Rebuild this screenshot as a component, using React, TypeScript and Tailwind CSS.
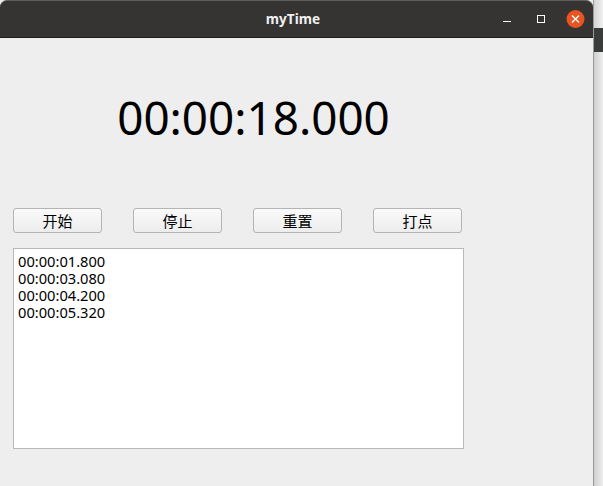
import React from 'react';

const font = { fontFamily: '"Noto Sans", "Noto Sans CJK SC", sans-serif' };

const buttons = ['开始', '停止', '重置', '打点'];
const laps = ['00:00:01.800', '00:00:03.080', '00:00:04.200', '00:00:05.320'];

export default function App() {
  return (
    <div className="flex h-[486px] w-[603px] overflow-hidden bg-[#e8e8e8]" style={font}>
      {/* Window */}
      <div className="flex h-full w-[594px] shrink-0 flex-col border-r border-[#9a9a9a] bg-[#eeeeee]">
        {/* Title bar */}
        <div className="relative flex h-[38px] shrink-0 items-center justify-center rounded-t-[7px] border-t border-t-[#5e5e5e] border-b border-b-[#1f1f1f] bg-[#353433] pr-[7px]">
          <span className="text-[13.6px] font-bold text-[#f0f0f0]">myTime</span>
          <div className="absolute right-[7px] top-[9px] flex items-center">
            <svg width="20" height="20" viewBox="0 0 20 20" className="mr-[15px]">
              <rect x="4" y="11" width="8" height="1" fill="#ffffff" />
            </svg>
            <svg width="20" height="20" viewBox="0 0 20 20" className="mr-[12px]">
              <rect x="3.5" y="5.5" width="7" height="7" fill="none" stroke="#ffffff" strokeWidth="1" />
            </svg>
            <svg width="20" height="20" viewBox="0 0 20 20">
              <circle cx="9.5" cy="9" r="9" fill="#e95420" />
              <path d="M6 5.5l7 7M13 5.5l-7 7" stroke="#ffffff" strokeWidth="1.4" />
            </svg>
          </div>
        </div>

        {/* Timer */}
        <div className="flex h-[170px] w-[507px] shrink-0 items-center justify-center pb-[10px] text-[45.8px] leading-none text-black">
          00:00:18.000
        </div>

        {/* Buttons */}
        <div className="ml-[13px] flex w-[449px] justify-between">
          {buttons.map((label) => (
            <button
              key={label}
              className="h-[25px] w-[89px] rounded-[3px] border border-[#b4b4b4] bg-gradient-to-b from-[#fafafa] to-[#ededed] pt-[1px] text-[15px] leading-none text-black"
            >
              {label}
            </button>
          ))}
        </div>

        {/* Lap list */}
        <div className="ml-[13px] mt-[15px] h-[201px] w-[451px] border border-[#b9b9b9] bg-white px-1 py-[4px] text-[14.67px] leading-[17px] text-black">
          {laps.map((lap) => (
            <div key={lap}>{lap}</div>
          ))}
        </div>
      </div>

      {/* Desktop behind */}
      <div className="flex flex-1 flex-col">
        <div className="h-[28px] bg-gradient-to-r from-[#d4d4d4] to-[#f0f0f0]" />
        <div className="h-[24px] bg-[#3a3c3c]" />
        <div className="flex-1 bg-gradient-to-r from-[#cfcfcf] to-[#eeeeee]" />
      </div>
    </div>
  );
}
